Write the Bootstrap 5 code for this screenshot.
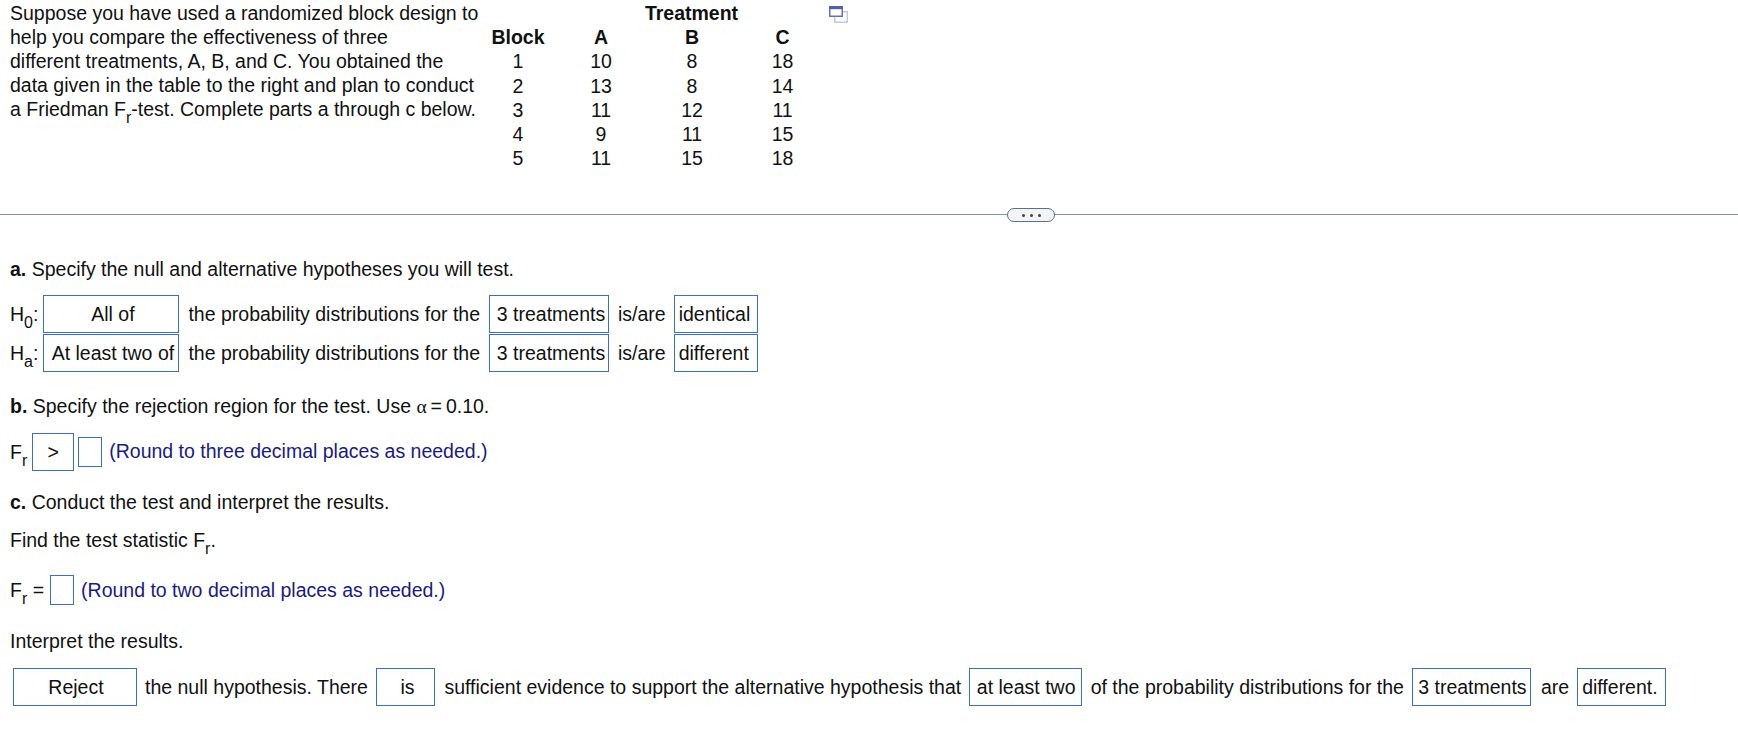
<!DOCTYPE html>
<html lang="en">
<head>
<meta charset="utf-8">
<title>Friedman test</title>
<link href="https://cdn.jsdelivr.net/npm/bootstrap@5.3.0/dist/css/bootstrap.min.css" rel="stylesheet">
<style>
body{font-family:"Liberation Sans",Arial,sans-serif;font-size:19.5px;line-height:24px;color:#111;background:#fff;overflow:hidden}
.stem{width:490px;padding-left:10px;line-height:24px;flex:none;white-space:nowrap}
.stem sub,.ln sub{font-size:16px;bottom:-.42em;line-height:0}
.datatab{width:347px;table-layout:fixed;margin:0;color:#111;--bs-table-bg:transparent}
.datatab th,.datatab td{padding:0;height:24.2px;line-height:24.2px;text-align:center;border:0;font-size:19.5px;color:#111}
.c0{width:56px}.c1{width:110px}.c2{width:72px}.c3{width:109px}
.topbar{height:214px;padding-top:1px}
.winicon{margin-left:-8px;margin-top:5px;flex:none}
.rule{height:1px;background:#8b91a6}
.morebtn{position:absolute;left:1007px;top:-6px;width:48px;height:14px;border:1px solid #5c7086;border-radius:7px;background:#f3f4f6;padding:0;line-height:0}
.morebtn i{display:inline-block;width:3px;height:3px;border-radius:50%;background:#444;margin:0 2.5px;vertical-align:middle}
.ln{padding-left:10px}
.sa{margin-top:42px}
.h-row{height:38px;margin-top:1px}
.h0{margin-top:14px}
.bx{border:1px solid #3b6fc6;height:38px;display:inline-flex;align-items:center;justify-content:center;flex:none;white-space:nowrap;background:#fff}
.w137{width:136px;margin-left:5px;padding-left:3px}
.w120{width:120px;padding-left:4px}
.w84{width:84px;justify-content:flex-start;padding-left:4px}
.gap-t{margin-left:9px;margin-right:9px;white-space:nowrap}
.gap-u{margin-left:9px;margin-right:8px;white-space:nowrap}
.sb{margin-top:22px}
.rowb{margin-top:14px;height:38px}
.w42{width:42px;margin-left:5px}
.blank{border:1px solid #3b6fc6;height:30px;width:24px;flex:none;background:#fff}
.blank-b{margin-left:4px}
.blank-c{margin-left:6px}
.alpha{font-family:"Liberation Serif",serif}
.hint{color:#1b1b7d;white-space:nowrap;margin-left:7px}
.hint-b{margin-bottom:2px}
.sc{margin-top:19px}
.sd{margin-top:14px}
.rowc{margin-top:23px;height:30px}
.se{margin-top:24px}
.rowd{margin-top:15px;height:38px;padding-left:13px}
.w124{width:124px;padding-left:2px}.w59{width:59px;padding-left:4px}.w113{width:113px;padding-left:2px}
.w120d{width:119px;padding-left:2px}
.w89{width:89px;justify-content:flex-start;padding-left:4px}
.g1{margin:0 8px}.g2{margin:0 7.5px 0 9.5px}.g3{margin:0 8px 0 9px}.g4{margin:0 8px 0 10px}
</style>
</head>
<body>
<div class="topbar d-flex align-items-start">
  <div class="stem">Suppose you have used a randomized block design to<br>help you compare the effectiveness of three<br>different treatments, A, B, and C. You obtained the<br>data given in the table to the right and plan to conduct<br>a Friedman F<sub>r</sub>-test. Complete parts a through c below.</div>
  <table class="table datatab">
    <colgroup><col class="c0"><col class="c1"><col class="c2"><col class="c3"></colgroup>
    <thead>
      <tr><th></th><th colspan="3">Treatment</th></tr>
      <tr><th>Block</th><th>A</th><th>B</th><th>C</th></tr>
    </thead>
    <tbody>
      <tr><td>1</td><td>10</td><td>8</td><td>18</td></tr>
      <tr><td>2</td><td>13</td><td>8</td><td>14</td></tr>
      <tr><td>3</td><td>11</td><td>12</td><td>11</td></tr>
      <tr><td>4</td><td>9</td><td>11</td><td>15</td></tr>
      <tr><td>5</td><td>11</td><td>15</td><td>18</td></tr>
    </tbody>
  </table>
  <svg class="winicon" width="19" height="17" viewBox="0 0 19 17" aria-hidden="true">
    <rect x="5.75" y="5.75" width="12.5" height="10.5" fill="none" stroke="#c3c8e6" stroke-width="1.5"/>
    <rect x="0.75" y="0.75" width="12.5" height="9.5" fill="#fff" stroke="#6474b9" stroke-width="1.5"/>
    <rect x="0" y="0" width="14" height="3.2" fill="#5061ad"/>
  </svg>
</div>
<div class="rule position-relative"><button type="button" class="morebtn"><i></i><i></i><i></i></button></div>

<div class="ln sa"><b>a.</b> Specify the null and alternative hypotheses you will test.</div>
<div class="ln d-flex align-items-center h-row h0">
  <span>H<sub>0</sub>:</span><span class="bx w137">All of</span><span class="gap-t">the probability distributions for the</span><span class="bx w120">3 treatments</span><span class="gap-u">is/are</span><span class="bx w84">identical</span>
</div>
<div class="ln d-flex align-items-center h-row">
  <span>H<sub>a</sub>:</span><span class="bx w137">At least two of</span><span class="gap-t">the probability distributions for the</span><span class="bx w120">3 treatments</span><span class="gap-u">is/are</span><span class="bx w84">different</span>
</div>

<div class="ln sb"><b>b.</b> Specify the rejection region for the test. Use <span class="alpha">&#945;</span>&#8201;=&#8201;0.10.</div>
<div class="ln d-flex align-items-center rowb">
  <span>F<sub>r</sub></span><span class="bx w42">&gt;</span><span class="blank blank-b"></span><span class="hint hint-b">(Round to three decimal places as needed.)</span>
</div>

<div class="ln sc"><b>c.</b> Conduct the test and interpret the results.</div>
<div class="ln sd">Find the test statistic F<sub>r</sub>.</div>
<div class="ln d-flex align-items-center rowc">
  <span>F<sub>r</sub> =</span><span class="blank blank-c"></span><span class="hint">(Round to two decimal places as needed.)</span>
</div>
<div class="ln se">Interpret the results.</div>
<div class="d-flex align-items-center rowd">
  <span class="bx w124">Reject</span><span class="g1 text-nowrap">the null hypothesis. There</span><span class="bx w59">is</span><span class="g2 text-nowrap">sufficient evidence to support the alternative hypothesis that</span><span class="bx w113">at least two</span><span class="g3 text-nowrap">of the probability distributions for the</span><span class="bx w120d">3 treatments</span><span class="g4 text-nowrap">are</span><span class="bx w89">different.</span>
</div>
<script src="https://cdn.jsdelivr.net/npm/bootstrap@5.3.0/dist/js/bootstrap.bundle.min.js"></script>
</body>
</html>
